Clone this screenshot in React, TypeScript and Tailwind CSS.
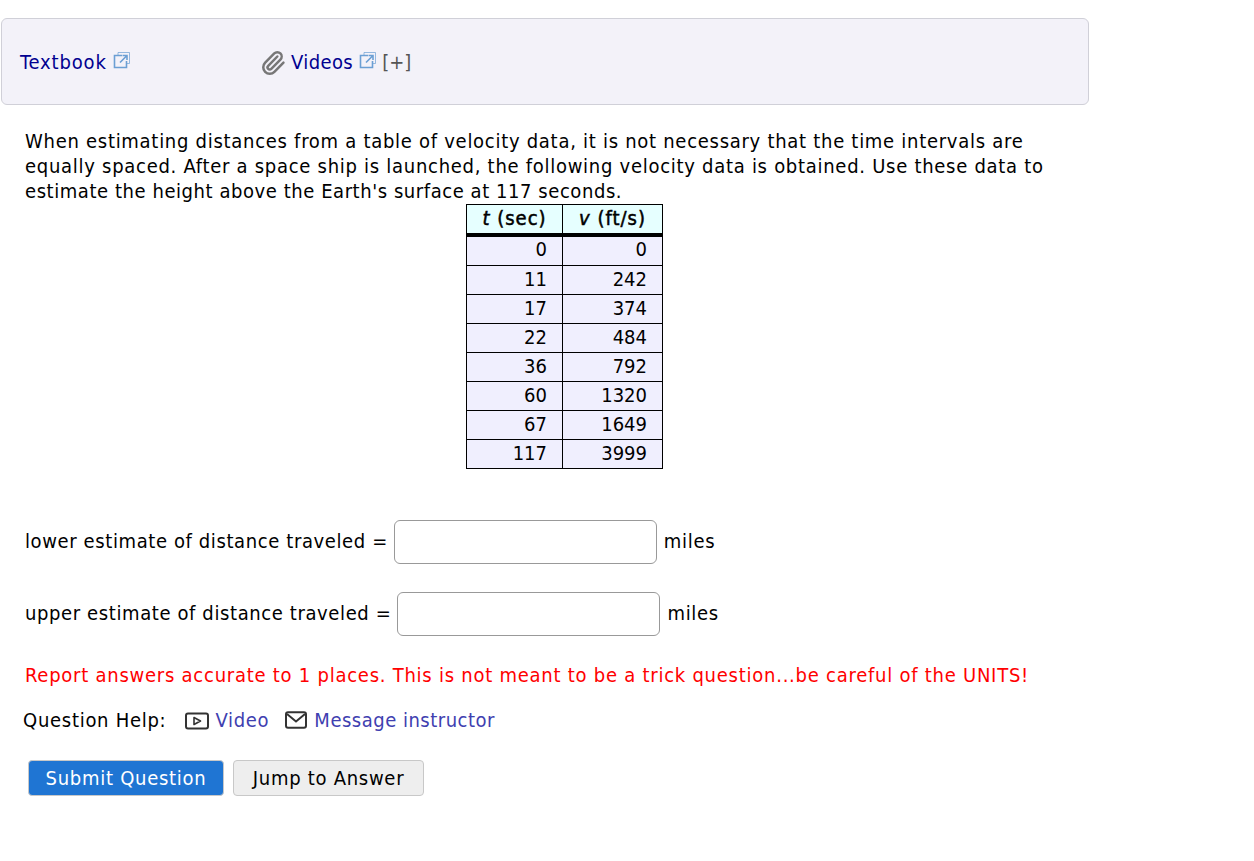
import { Paperclip } from "lucide-react";

const rows = [
  ["0", "0"],
  ["11", "242"],
  ["17", "374"],
  ["22", "484"],
  ["36", "792"],
  ["60", "1320"],
  ["67", "1649"],
  ["117", "3999"],
];

function ExtIcon() {
  return (
    <svg width="18" height="18" viewBox="0 0 18 18" fill="none" className="ml-[6px] mb-[5px]" stroke="#6b9fd4">
      <path d="M9 4.5H1.5V16.5H13.5V10" strokeWidth="1.6" />
      <path d="M5 1.5H16.5V12.5H14M5 1.5V4" strokeWidth="1" opacity="0.7" />
      <path d="M7 11.5L14 4.5M9.5 4.5H14V9" strokeWidth="1.6" />
    </svg>
  );
}

function PlayBox() {
  return (
    <svg width="24" height="18" viewBox="0 0 24 18" fill="none" className="mr-[6px]">
      <rect x="1" y="1.5" width="22" height="15" rx="2" stroke="#333" strokeWidth="2" />
      <path d="M9 5.5 L15.5 9 L9 12.5 Z" stroke="#333" strokeWidth="1.6" strokeLinejoin="round" />
    </svg>
  );
}

function MailBox() {
  return (
    <svg width="22" height="18" viewBox="0 0 22 18" fill="none" className="ml-4 mr-[7px] mb-0.5">
      <rect x="1" y="1.2" width="20" height="15.6" rx="2" stroke="#333" strokeWidth="2" />
      <path d="M2 3 L11 10.5 L20 3" stroke="#333" strokeWidth="2" />
    </svg>
  );
}

function AnswerRow({ label, className }: { label: string; className: string }) {
  return (
    <div className={`flex items-center ${className}`}>
      <span className="tracking-[0.61px] pb-0.5">{label}</span>
      <input className="w-[263px] h-11 ml-[6px] mr-[7px] bg-white border border-[#999] rounded-md outline-none" />
      <span className="pb-0.5">miles</span>
    </div>
  );
}

export default function App() {
  return (
    <div
      className="h-[861px] bg-white text-[20px] leading-[25px] tracking-[0.72px] text-black overflow-hidden"
      style={{ fontFamily: '"DejaVu Sans Condensed", "DejaVu Sans", sans-serif' }}
    >
      <div className="w-[1088px] h-[87px] mt-[18px] ml-px bg-[#f3f2f9] border border-[#d0d0d8] rounded-md flex items-center pl-[18px] pt-px">
        <div className="w-[240px] flex items-center">
          <a className="text-[#000090] tracking-[0.85px]">Textbook</a>
          <ExtIcon />
        </div>
        <Paperclip className="h-[26px] w-[26px] text-[#777] mr-[5px] mt-0.5" strokeWidth={2.3} />
        <a className="text-[#000090] tracking-[0.4px]">Videos</a>
        <ExtIcon />
        <span className="ml-[5px] text-[#555] tracking-normal">[+]</span>
      </div>

      <div className="ml-[25px] mt-6 w-[1050px]">
        <p>
          When estimating distances from a table of velocity data, it is not necessary that the time intervals are
          equally spaced. After a space ship is launched, the following velocity data is obtained. Use these data to{" "}
          <span className="tracking-[0.56px]">estimate the height above the Earth's surface at 117 seconds.</span>
        </p>
      </div>

      <table className="ml-[466px] w-[197px] border-collapse border border-black tracking-normal">
        <thead>
          <tr className="bg-[#e6ffff] h-[30px]">
            <th className="w-[96px] border border-black border-b-4 font-normal tracking-[1px] [-webkit-text-stroke:0.5px_black] text-center">
              <i>t</i> (sec)
            </th>
            <th className="border border-black border-b-4 font-normal tracking-[1px] [-webkit-text-stroke:0.5px_black] text-center">
              <i>v</i> (ft/s)
            </th>
          </tr>
        </thead>
        <tbody>
          {rows.map((r, i) => (
            <tr key={r[0]} className={i === 0 ? "bg-[#f0effe] h-[31px]" : "bg-[#f0effe] h-[29px]"}>
              <td className="border border-black text-right pr-[15px] pb-0.5">{r[0]}</td>
              <td className="border border-black text-right pr-[15px] pb-0.5">{r[1]}</td>
            </tr>
          ))}
        </tbody>
      </table>

      <div className="ml-[25px]">
        <AnswerRow label="lower estimate of distance traveled =" className="mt-[51px]" />
        <AnswerRow label="upper estimate of distance traveled =" className="mt-[28px]" />
        <p className="mt-[27px] text-[#ff0000] tracking-[0.75px]">
          Report answers accurate to 1 places. This is not meant to be a trick question...be careful of the UNITS!
        </p>
      </div>

      <div className="ml-[23px] mt-[20px] flex items-center">
        <span className="mr-[19px]">Question Help:</span>
        <PlayBox />
        <a className="text-[#4040b0]">Video</a>
        <MailBox />
        <a className="text-[#4040b0] tracking-[0.5px]">Message instructor</a>
      </div>

      <div className="ml-[28px] mt-[27px] flex gap-[9px]">
        <button className="h-9 w-[196px] bg-[#1f75d3] border border-[#c8c8c8] rounded text-white">Submit Question</button>
        <button className="h-9 w-[191px] bg-[#eeeeee] border border-[#c8c8c8] rounded text-black">Jump to Answer</button>
      </div>
    </div>
  );
}
